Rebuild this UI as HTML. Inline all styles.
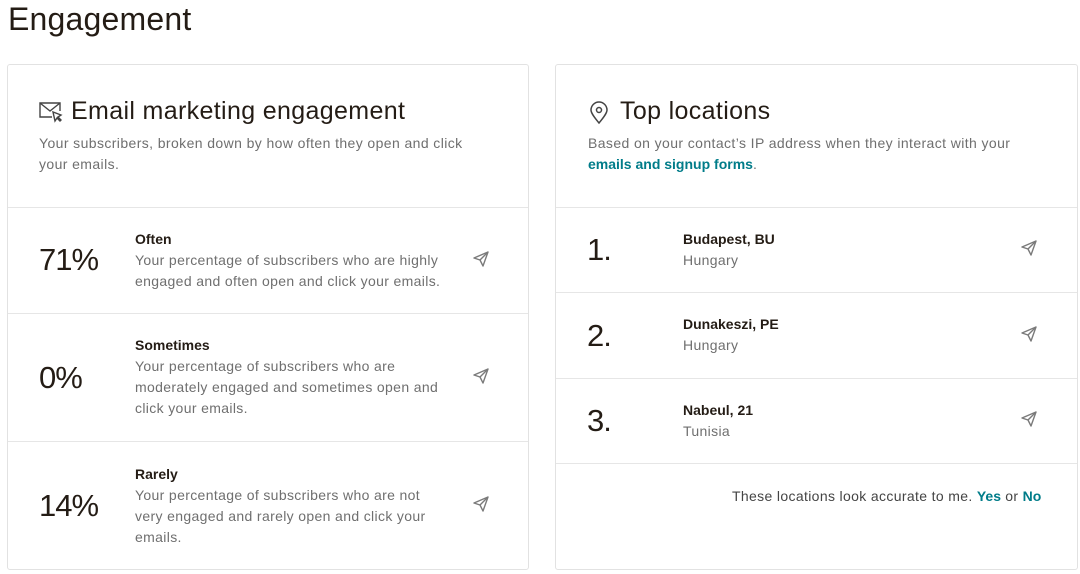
<!DOCTYPE html>
<html><head><style>
*{margin:0;padding:0;box-sizing:border-box}
body{width:1080px;height:574px;background:#fff;font-family:"Liberation Sans",sans-serif;color:#241c15;position:relative;overflow:hidden}
.a{position:absolute;white-space:nowrap}
.card{position:absolute;border:1px solid #e2e2e2;border-radius:3px}
.hr{position:absolute;height:1px;background:#e6e6e6}
.sub{font-size:14px;color:#6f6f6f;line-height:21px;letter-spacing:0.4px}
.big{font-size:31px;font-weight:300;color:#241c15;letter-spacing:-1px}
.lbl{font-size:14px;color:#241c15;font-weight:bold}
.ds{font-size:14px;color:#6f6f6f;line-height:21px;letter-spacing:0.35px}
.ic{position:absolute;width:18px;height:18px}
</style></head><body>
<div class="a" style="left:8px;top:1px;font-size:32px;color:#241c15;letter-spacing:0.2px">Engagement</div>

<div class="card" style="left:7px;top:64px;width:522px;height:506px"></div>
<div class="card" style="left:555px;top:64px;width:523px;height:506px"></div>

<svg class="a" style="left:39px;top:101px" width="24" height="22" viewBox="0 0 24 22" fill="none" stroke="#444" stroke-width="1.4"><path d="M13 16H1V2h20v8"/><path d="M1 2l10 8 10-8"/><path d="M14 11l2 9 2-3 3 3 1-1-3-3 3-2z"/></svg>
<div class="a" style="left:71px;top:97px;font-size:25px;letter-spacing:0.35px">Email marketing engagement</div>
<div class="a sub" style="left:39px;top:133px">Your subscribers, broken down by how often they open and click<br>your emails.</div>
<div class="hr" style="left:8px;top:207px;width:520px"></div>
<div class="hr" style="left:8px;top:313px;width:520px"></div>
<div class="hr" style="left:8px;top:441px;width:520px"></div>

<div class="a big" style="left:39px;top:242px">71%</div>
<div class="a lbl" style="left:135px;top:231px">Often</div>
<div class="a ds" style="left:135px;top:250px">Your percentage of subscribers who are highly<br>engaged and often open and click your emails.</div>

<div class="a big" style="left:39px;top:360px">0%</div>
<div class="a lbl" style="left:135px;top:337px">Sometimes</div>
<div class="a ds" style="left:135px;top:356px">Your percentage of subscribers who are<br>moderately engaged and sometimes open and<br>click your emails.</div>

<div class="a big" style="left:39px;top:488px">14%</div>
<div class="a lbl" style="left:135px;top:466px">Rarely</div>
<div class="a ds" style="left:135px;top:485px">Your percentage of subscribers who are not<br>very engaged and rarely open and click your<br>emails.</div>

<svg class="a" style="left:589px;top:101px" width="20" height="24" viewBox="0 0 20 24" fill="none" stroke="#444" stroke-width="1.5"><path d="M10 22C5 16 2 12 2 9a8 8 0 0116 0c0 3-3 7-8 13z"/><circle cx="10" cy="9" r="2.5"/></svg>
<div class="a" style="left:620px;top:97px;font-size:25px;letter-spacing:0.35px">Top locations</div>
<div class="a sub" style="left:588px;top:133px">Based on your contact’s IP address when they interact with your<br><span style="color:#007c89;font-weight:bold;letter-spacing:0">emails and signup forms</span>.</div>
<div class="hr" style="left:556px;top:207px;width:521px"></div>
<div class="hr" style="left:556px;top:292px;width:521px"></div>
<div class="hr" style="left:556px;top:378px;width:521px"></div>
<div class="hr" style="left:556px;top:463px;width:521px"></div>

<div class="a big" style="left:587px;top:232px">1.</div>
<div class="a lbl" style="left:683px;top:231px">Budapest, BU</div>
<div class="a ds" style="left:683px;top:250px">Hungary</div>
<div class="a big" style="left:587px;top:318px">2.</div>
<div class="a lbl" style="left:683px;top:316px">Dunakeszi, PE</div>
<div class="a ds" style="left:683px;top:335px">Hungary</div>
<div class="a big" style="left:587px;top:403px">3.</div>
<div class="a lbl" style="left:683px;top:402px">Nabeul, 21</div>
<div class="a ds" style="left:683px;top:421px">Tunisia</div>

<div class="a" style="left:732px;top:488px;font-size:14px;color:#444;letter-spacing:0.35px">These locations look accurate to me. <b style="color:#007c89;letter-spacing:0">Yes</b> or <b style="color:#007c89;letter-spacing:0">No</b></div>

<svg width="0" height="0" style="position:absolute"><defs><g id="p" fill="none" stroke="#7a7a7a" stroke-width="1.4" stroke-linejoin="round"><path d="M2 8L16 2 11 16 8 10z"/><path d="M8 10l8-8"/></g></defs></svg>
<svg class="ic" style="left:472px;top:250px" viewBox="0 0 18 18"><use href="#p"/></svg>
<svg class="ic" style="left:472px;top:367px" viewBox="0 0 18 18"><use href="#p"/></svg>
<svg class="ic" style="left:472px;top:495px" viewBox="0 0 18 18"><use href="#p"/></svg>
<svg class="ic" style="left:1020px;top:239px" viewBox="0 0 18 18"><use href="#p"/></svg>
<svg class="ic" style="left:1020px;top:325px" viewBox="0 0 18 18"><use href="#p"/></svg>
<svg class="ic" style="left:1020px;top:410px" viewBox="0 0 18 18"><use href="#p"/></svg>
</body></html>
